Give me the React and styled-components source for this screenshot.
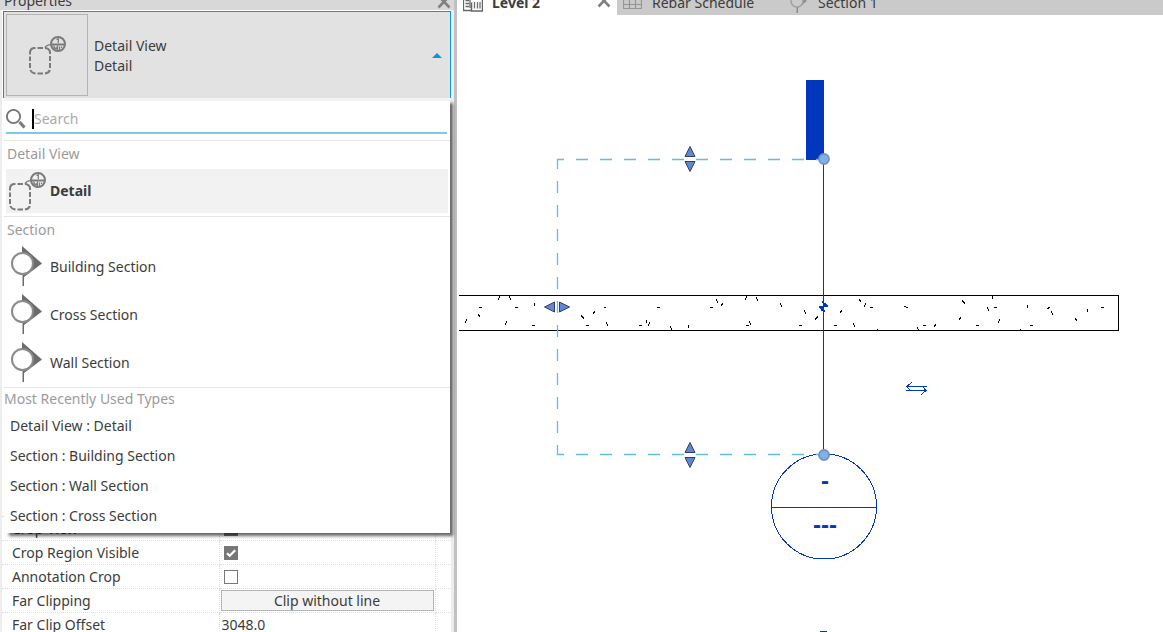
import React from 'react';
import styled, { createGlobalStyle, css } from 'styled-components';

const GlobalStyle = createGlobalStyle`
  * { box-sizing: border-box; }
  body {
    margin: 0;
    background: #fff;
    overflow: hidden;
    color: #3c3c3c;
    font: 14px/20px "Noto Sans", "Open Sans", sans-serif;
  }
  button, input { font: inherit; color: inherit; }
`;

const BLUE = '#0037bd';
const CYAN = '#63bddd';

const Workspace = styled.div`
  display: flex;
  height: 100vh;
  overflow: hidden;
`;

/* ---------- properties palette ---------- */

const Palette = styled.aside`
  flex: 0 0 457px;
  display: flex;
  flex-direction: column;
  background: #fff;
  border-right: 3px solid #c1c1c1;
`;

const PaletteTitle = styled.header`
  flex: none;
  display: flex;
  align-items: flex-end;
  justify-content: space-between;
  height: 10px;
  padding: 0 3px 0 4px;
  overflow: hidden;
  background: #d8d8d8;
  line-height: 18px;
`;

const CloseButton = styled.button`
  display: flex;
  padding: 0;
  border: 0;
  background: none;
`;

const PaletteBody = styled.div`
  flex: 1;
  min-height: 0;
  padding: 1px 0 0;
  border: solid #ededed;
  border-width: 0 3px 0 2px;
`;

const TypeSelector = styled.button`
  display: flex;
  align-items: center;
  gap: 6px;
  width: calc(100% - 1px);
  height: 87px;
  margin-left: 1px;
  padding: 1px 8px 1px 2px;
  border: solid #0f96d3;
  border-width: 1px 1px 0;
  background: #e2e2e2;
  text-align: left;
`;

const Thumbnail = styled.span`
  display: flex;
  align-items: center;
  justify-content: center;
  width: 82px;
  height: 82px;
  border: 1px solid #b3b3b3;
`;

const TypeNames = styled.span`
  flex: 1;
  display: flex;
  flex-direction: column;
  padding-top: 2px;
`;

const TypeMenu = styled.div`
  position: relative;
  z-index: 1;
  margin: 0 1px 0 2px;
  padding-bottom: 2px;
  border-top: 3px solid #f3f3f3;
  background: #fff;
  box-shadow: 4px 4px 3px -1px rgba(0, 0, 0, 0.6);
  clip-path: inset(0 -8px -8px 0);
`;

const SearchBox = styled.label`
  display: flex;
  align-items: center;
  height: 33px;
  margin: 0 3px 6px 2px;
  padding-top: 5px;
  border-bottom: 2px solid #7ccae8;
`;

const Caret = styled.span`
  width: 2px;
  height: 20px;
  margin-left: 6px;
  background: #000;
`;

const SearchInput = styled.input`
  flex: 1;
  min-width: 0;
  padding: 0;
  border: 0;
  outline: 0;
  background: none;
  &::placeholder { color: #aaa; opacity: 1; }
`;

const Group = styled.section`
  padding-bottom: ${(p) => (p.$gapAfter ? '3px' : '0')};
  border-top: 1px solid #e5e5e5;
`;

const GroupTitle = styled.h2`
  margin: 0;
  padding: ${(p) => (p.$recent ? '1px 0 2px' : '3px')};
  color: #9b9b9b;
  font-size: 14px;
  font-weight: 400;
  line-height: 20px;
`;

const TypeItem = styled.button`
  display: flex;
  align-items: center;
  gap: 4px;
  width: calc(100% - 4px);
  height: 48px;
  margin-left: 2px;
  padding: 0 3px;
  border: 0;
  background: none;
  text-align: left;
  ${(p) => p.$selected && css`
    height: 44px;
    margin-top: 2px;
    background: #f2f2f2;
    font-weight: 700;
  `}
`;

const IconSlot = styled.span`
  display: flex;
  width: 37px;
`;

const RecentItem = styled.button`
  display: block;
  width: 100%;
  height: 30px;
  padding: 0 6px;
  border: 0;
  background: none;
  text-align: left;
`;

const PropertyTable = styled.table`
  width: 100%;
  margin-top: -17px;
  border-collapse: collapse;
  table-layout: fixed;
`;

const Row = styled.tr`
  height: 24px;
`;

const NameCell = styled.th`
  width: 217px;
  padding: 0 10px;
  border: 1px dotted #dcdcdc;
  border-left: 0;
  font-weight: 400;
  text-align: left;
`;

const ValueCell = styled.td`
  padding: 0 1px;
  border: 1px dotted #dcdcdc;
`;

const EdgeCell = styled.td`
  width: 16px;
  padding: 0;
  border: 1px dotted #dcdcdc;
  border-right: 0;
`;

const Tick = styled.input`
  appearance: none;
  display: block;
  width: 14px;
  height: 14px;
  margin: 0 3px;
  border: 1px solid #777;
  background: #fff;
  &:checked {
    background: #777 url("data:image/svg+xml,%3Csvg xmlns='http://www.w3.org/2000/svg' viewBox='0 0 12 12'%3E%3Cpath d='M2 6.2 4.7 8.8 10.2 3.2' fill='none' stroke='white' stroke-width='2.2'/%3E%3C/svg%3E");
  }
`;

const ClipButton = styled.button`
  display: block;
  width: 100%;
  height: 21px;
  padding: 0;
  border: 1px solid #b4b4b4;
  background: #f4f4f4;
  line-height: 19px;
`;

const ValueInput = styled.input`
  display: block;
  width: 100%;
  height: 22px;
  padding: 0 1px;
  border: 0;
  background: none;
`;

/* ---------- view area ---------- */

const ViewArea = styled.main`
  flex: 1;
  min-width: 0;
  display: flex;
  flex-direction: column;
`;

const TabBar = styled.nav`
  flex: none;
  display: flex;
  height: 15px;
  overflow: hidden;
  background: #cacaca;
`;

const TabItem = styled.div`
  display: flex;
  align-items: flex-end;
  justify-content: space-between;
  width: ${(p) => (p.$active ? '160px' : '167px')};
  padding: 0 6px;
  background: ${(p) => (p.$active ? '#fff' : 'transparent')};
`;

const TabLink = styled.button`
  display: flex;
  align-items: center;
  gap: ${(p) => (p.$active ? '9px' : '10px')};
  padding: 0;
  border: 0;
  background: none;
  font-weight: ${(p) => (p.$active ? 700 : 400)};
  line-height: 24px;
`;

const TabClose = styled(CloseButton)`
  height: 26px;
  align-items: center;
`;

const Drawing = styled.svg`
  flex: none;
  display: block;
`;

/* ---------- icons ---------- */

const CloseIcon = () => (
  <svg width="14" height="14" viewBox="0 0 14 14" fill="none" stroke="#808080" strokeWidth="2.6" aria-hidden="true">
    <path d="M1.5 0 12.5 11.500M12.5 0 1.5 11.500" />
  </svg>
);

const DetailIcon = () => (
  <svg width="37" height="39" viewBox="0 0 37 39" fill="none" stroke="#7b7b7b" aria-hidden="true">
    <path
      d="M1 18.500V17Q1 12.500 5 12H6.500M8.500 12H14M16 12Q20.500 12.500 21 16V18M21 20V25M21 27V32M1 20.500V25M1 27V32M1.300 34Q2.500 37 6.500 37.500M8.500 37.500H14M16 37.500Q20 37 20.800 34"
      strokeWidth="2"
    />
    <path d="M16 12C17 9.500 19 8.700 22 8.700" strokeWidth="1.3" />
    <circle cx="29" cy="8" r="7" strokeWidth="2" />
    <path d="M22 8.500H36" strokeWidth="2" />
    <path d="M27.500 3.500 29.300 2.700V7M25 14V10.500L27 13 28.500 10.500V14M30.500 14V10.500M32.500 10.500V12" strokeWidth="1.2" />
  </svg>
);

const SectionIcon = () => (
  <svg width="34" height="42" viewBox="0 0 34 42" aria-hidden="true">
    <path d="M13 0 33 17.500 15 31V40H13.500V28L23 17.500 13 7Z" fill="#6c6c6c" />
    <circle cx="13.500" cy="17.500" r="10.500" fill="#fff" stroke="#8b8b8b" strokeWidth="2" />
  </svg>
);

const SearchIcon = () => (
  <svg width="20" height="20" viewBox="0 0 20 20" fill="none" stroke="#777" aria-hidden="true">
    <circle cx="7.500" cy="7.500" r="6.600" strokeWidth="1.900" />
    <path d="M13.500 13 18.500 18.500" strokeWidth="3" />
  </svg>
);

const PlanIcon = () => (
  <svg width="20" height="18" viewBox="0 0 20 18" fill="none" stroke="#666" aria-hidden="true">
    <path d="M.5 1V16.500H9M1 2.500H7V14M2.500 6.500H6M2.500 9.500H6M2.500 12.500H6" strokeWidth="1.300" />
    <path d="M7.500 4.500H19.500V17H8.500V8.500" strokeWidth="1.500" />
    <path d="M11.500 8V14.500M14.500 8V14.500M17 8V14.500" stroke="#707070" strokeWidth="1.300" />
  </svg>
);

const ScheduleIcon = () => (
  <svg width="19" height="18" viewBox="0 0 19 18" fill="none" stroke="#959595" aria-hidden="true">
    <path d="M.5.500H18.500V14.500H.500ZM.500 5.500H18.500M.500 10.500H18.500M6.500 1V14M12.500 1V14" strokeWidth="1.200" />
  </svg>
);

const SectionTabIcon = () => (
  <svg width="18" height="22" viewBox="0 0 18 22" aria-hidden="true">
    <path d="M7 1 17 9 8 16V21H6.500V14L12 9 7 4Z" fill="#8e8e8e" />
    <circle cx="7" cy="9" r="6" fill="#cacaca" stroke="#a0a0a0" strokeWidth="1.500" />
  </svg>
);

/* ---------- drawing content ---------- */

/* Concrete stipple: x1, y1, x2, y2 of each stroke. */
const STIPPLE = [
  [498, 299, 500, 296], [509, 296, 511, 299], [479, 307, 482, 307], [478, 314, 480, 316],
  [465, 322, 467, 319], [505, 324, 507, 321], [515, 307, 518, 307], [534, 303, 534, 305],
  [532, 325, 535, 325], [581, 315, 584, 318], [593, 313, 595, 311], [604, 307, 606, 307],
  [586, 325, 589, 325], [606, 322, 608, 325], [657, 307, 660, 307], [639, 325, 642, 325],
  [646, 320, 646, 322], [648, 325, 650, 322], [670, 326, 672, 329], [688, 325, 688, 327],
  [716, 299, 718, 302], [721, 305, 723, 303], [710, 307, 713, 307], [745, 299, 747, 296],
  [756, 297, 758, 300], [780, 303, 782, 306], [804, 310, 806, 313], [815, 319, 818, 316],
  [749, 321, 751, 324], [746, 325, 749, 325], [799, 325, 802, 325], [834, 325, 837, 325],
  [853, 323, 855, 326], [840, 312, 842, 310], [859, 299, 861, 301], [864, 306, 866, 303],
  [870, 307, 873, 307], [904, 306, 908, 307], [877, 329, 878, 330], [917, 327, 919, 330],
  [923, 325, 926, 325], [934, 326, 936, 324], [962, 300, 965, 303], [992, 296, 992, 298],
  [987, 307, 989, 310], [994, 307, 997, 307], [1027, 305, 1027, 307], [1047, 308, 1050, 307],
  [1051, 311, 1053, 314], [1087, 309, 1087, 311], [1101, 307, 1104, 307], [1075, 318, 1077, 320],
  [959, 319, 961, 317], [998, 322, 1000, 319], [976, 325, 979, 325], [1030, 325, 1033, 325],
  [1020, 329, 1021, 330],
];

const stipplePath = STIPPLE.map(([a, b, c, d]) => `M${a} ${b + 0.5}L${c} ${d + 0.5}`).join('');
const stippleUpright = STIPPLE.filter(([a, , c]) => a === c);

const StretchGrip = ({ x, y, turn = 0 }) => (
  <g transform={`translate(${x} ${y}) rotate(${turn})`} fill="#5f86d8" stroke="#34405e">
    <path d="M0-12.500 5-2.500H-5ZM0 12.500 5 2.500H-5Z" />
  </g>
);

const EndGrip = ({ y }) => (
  <circle cx="824" cy={y} r="5" fill="#79b1f2" stroke="#7e92ac" strokeWidth="1.800" />
);

const SectionDrawing = () => (
  <Drawing width="706" height="617" viewBox="457 15 706 617" role="img" aria-label="Section marker across slab">
    <g fill="none" stroke="#000" shapeRendering="crispEdges">
      <path d="M459 295.500H1118.500V330.500H459" />
      <path d={stipplePath} />
      {stippleUpright.map(([a, b, , d]) => (
        <path key={a} d={`M${a + 0.5} ${b}V${d}`} />
      ))}
    </g>
    <rect x="806" y="80" width="18" height="80" fill={BLUE} />
    <g fill="none" stroke={BLUE} shapeRendering="crispEdges">
      <path d="M823.500 160V454" />
      <circle cx="824" cy="506.500" r="52.500" />
      <path d="M771.500 507.500H876.500" />
      <path d="M907 386.500H927M906 390.500H926" />
      <path d="M912 382 907 386.500 910 390M921 395 926 390.500 923 387" />
    </g>
    <path
      d="M822 301H824V303H826V304H827V305H828V307H824V310H825V312H823V311H821V309H820V308H819V306H823V303H822Z"
      fill={BLUE}
      shapeRendering="crispEdges"
    />
    <g fill="none" stroke={CYAN} strokeWidth="1.300" strokeDasharray="12 12">
      <path d="M557 159.500H823" strokeDashoffset="5" />
      <path d="M557 454.500H823" strokeDashoffset="5" />
      <path d="M557.500 159V455" strokeDashoffset="2" />
    </g>
    <StretchGrip x={690} y={159} />
    <StretchGrip x={690} y={455} />
    <StretchGrip x={557} y={307} turn={90} />
    <EndGrip y={159} />
    <EndGrip y={455} />
    <g fill={BLUE} fontFamily='"Liberation Sans", sans-serif' fontWeight="700" fontSize="24" textAnchor="middle">
      <text x="825" y="489">-</text>
      <text x="825" y="533">---</text>
    </g>
    <path d="M820 631.500H827" stroke={BLUE} />
  </Drawing>
);

const RECENT = [
  'Detail View : Detail',
  'Section : Building Section',
  'Section : Wall Section',
  'Section : Cross Section',
];

const PropertyRow = ({ id, name, children }) => (
  <Row>
    <NameCell scope="row"><label htmlFor={id}>{name}</label></NameCell>
    <ValueCell>{children}</ValueCell>
    <EdgeCell />
  </Row>
);

export default function App() {
  return (
    <Workspace>
      <GlobalStyle />
      <Palette>
        <PaletteTitle>
          <span>Properties</span>
          <CloseButton aria-label="Close"><CloseIcon /></CloseButton>
        </PaletteTitle>
        <PaletteBody>
          <TypeSelector>
            <Thumbnail><DetailIcon /></Thumbnail>
            <TypeNames>
              <span>Detail View</span>
              <span>Detail</span>
            </TypeNames>
            <svg width="10" height="5" viewBox="0 0 10 5" aria-hidden="true">
              <path d="M5 0 10 5H0Z" fill="#0f96d3" />
            </svg>
          </TypeSelector>
          <TypeMenu>
            <SearchBox>
              <SearchIcon />
              <Caret />
              <SearchInput type="text" placeholder="Search" aria-label="Search" />
            </SearchBox>
            <Group $gapAfter>
              <GroupTitle>Detail View</GroupTitle>
              <TypeItem $selected>
                <IconSlot><DetailIcon /></IconSlot>
                Detail
              </TypeItem>
            </Group>
            <Group>
              <GroupTitle>Section</GroupTitle>
              {['Building Section', 'Cross Section', 'Wall Section'].map((name) => (
                <TypeItem key={name}>
                  <IconSlot><SectionIcon /></IconSlot>
                  {name}
                </TypeItem>
              ))}
            </Group>
            <Group>
              <GroupTitle $recent>Most Recently Used Types</GroupTitle>
              {RECENT.map((name) => <RecentItem key={name}>{name}</RecentItem>)}
            </Group>
          </TypeMenu>
          <PropertyTable>
            <tbody>
              <PropertyRow id="crop-view" name="Crop View">
                <Tick id="crop-view" type="checkbox" defaultChecked />
              </PropertyRow>
              <PropertyRow id="crop-visible" name="Crop Region Visible">
                <Tick id="crop-visible" type="checkbox" defaultChecked />
              </PropertyRow>
              <PropertyRow id="annotation-crop" name="Annotation Crop">
                <Tick id="annotation-crop" type="checkbox" />
              </PropertyRow>
              <PropertyRow id="far-clipping" name="Far Clipping">
                <ClipButton id="far-clipping">Clip without line</ClipButton>
              </PropertyRow>
              <PropertyRow id="far-offset" name="Far Clip Offset">
                <ValueInput id="far-offset" type="text" defaultValue="3048.0" />
              </PropertyRow>
            </tbody>
          </PropertyTable>
        </PaletteBody>
      </Palette>
      <ViewArea>
        <TabBar>
          <TabItem $active>
            <TabLink $active><PlanIcon />Level 2</TabLink>
            <TabClose aria-label="Close view"><CloseIcon /></TabClose>
          </TabItem>
          <TabItem>
            <TabLink><ScheduleIcon />Rebar Schedule</TabLink>
          </TabItem>
          <TabItem>
            <TabLink><SectionTabIcon />Section 1</TabLink>
          </TabItem>
        </TabBar>
        <SectionDrawing />
      </ViewArea>
    </Workspace>
  );
}
